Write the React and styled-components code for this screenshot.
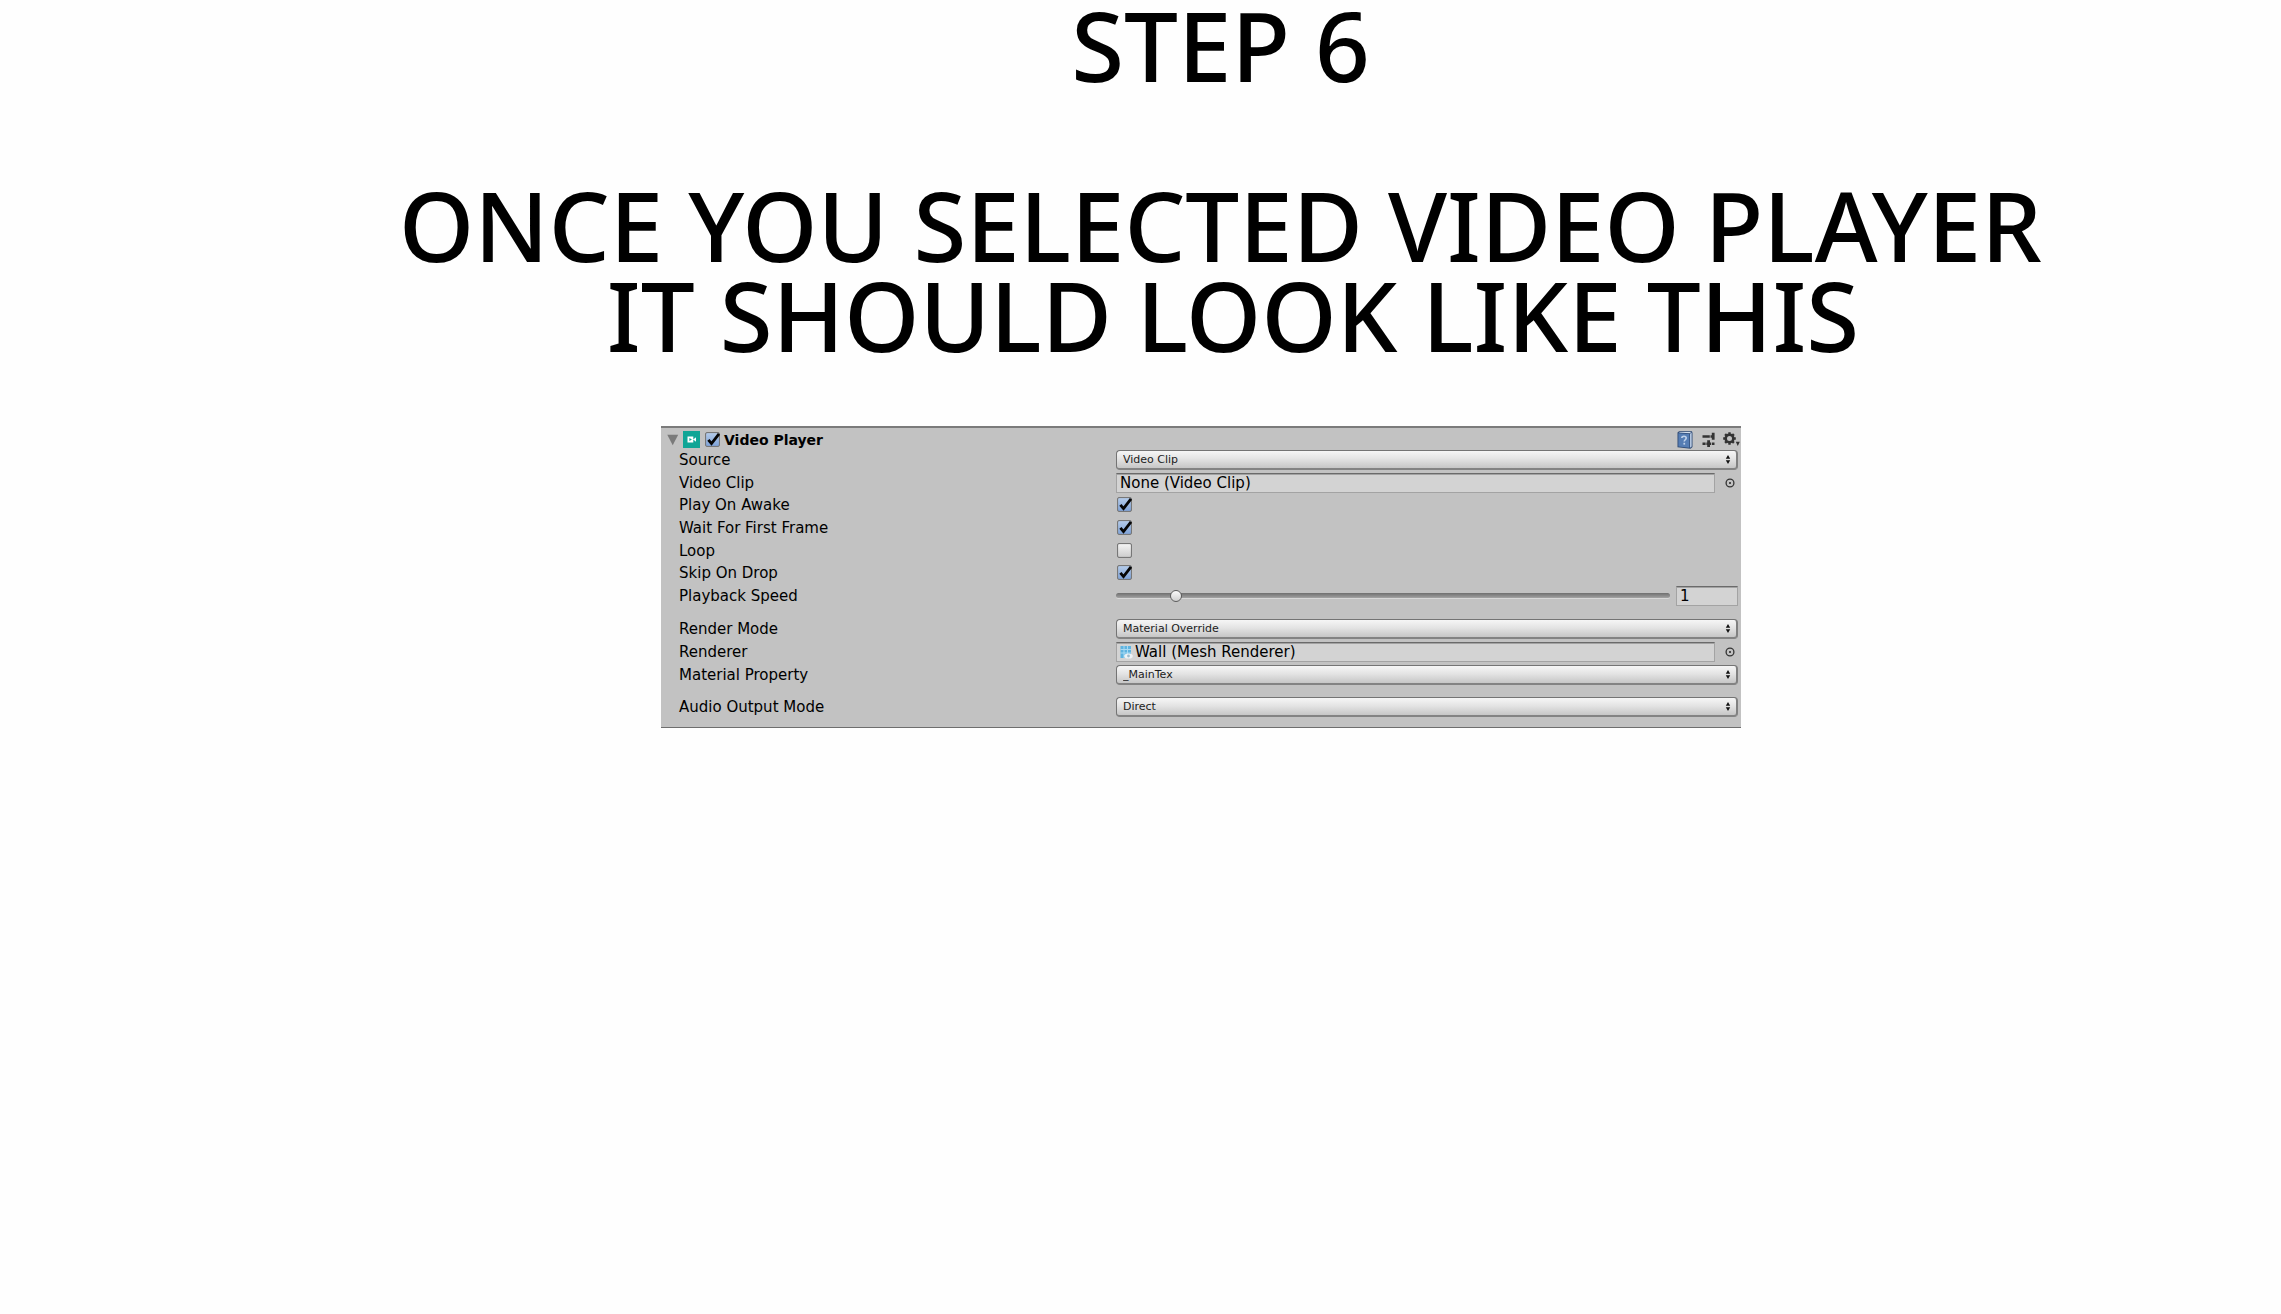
import React, { useState } from 'react'
import styled, { createGlobalStyle } from 'styled-components'

const GlobalStyle = createGlobalStyle`
  * {
    box-sizing: border-box;
  }
  body {
    margin: 0;
    background-color: #fefefe;
    color: #000;
    font-family: "DejaVu Sans", Verdana, sans-serif;
  }
`

const Slide = styled.main`
  display: flex;
  flex-direction: column;
`
const Heading = styled.header`
  padding-left: 160px;
  text-align: center;
  font-family: "Comic Sans MS", "Noto Sans", sans-serif;
  font-size: 96px;
  line-height: 90px;
  h1, p {
    margin: 0;
    font-size: inherit;
    font-weight: 500;
  }
  h1 {
    margin-bottom: 90px;
  }
`
const Panel = styled.section`
  margin: 66px 540px 0 661px;
  padding-bottom: 9px;
  background-color: #c2c2c2;
  border-top: 2px solid #7b7b7b;
  border-bottom: 1px solid #6e6e6e;
`
const TitleBar = styled.div`
  display: flex;
  align-items: center;
  height: 21px;
  padding: 2px 1px 0 6px;
  h2 {
    flex: 1;
    margin: 0 0 0 3px;
    font-size: 14px;
    line-height: 18px;
  }
`
const IconButton = styled.button`
  display: flex;
  padding: 0;
  margin-left: ${props => props.$gap || 0}px;
  border: 0;
  background: none;
`
const TypeIcon = styled.svg`
  margin: 0 5px 0 4px;
`
const Group = styled.div`
  display: grid;
  grid-auto-rows: 1fr;
  height: ${props => props.$height}px;
  margin-bottom: ${props => props.$space || 0}px;
  padding: 0 3px 0 18px;
`
const Row = styled.div`
  display: grid;
  grid-template-columns: 437px minmax(0, 1fr);
  align-items: center;
`
const Label = styled.label`
  font-size: 15px;
  line-height: 20px;
`
const SelectBox = styled.div`
  position: relative;
  display: flex;
  select {
    appearance: none;
    width: 100%;
    height: 20px;
    padding: 0 20px 0 6px;
    border: 1px solid #6f6f6f;
    border-width: 1px 2px 2px 1px;
    border-color: #747474 #808080 #838383 #747474;
    border-radius: 4px;
    background: linear-gradient(#f6f6f6, #e4e4e4 45%, #c6c6c6);
    color: #1c1c1c;
    font-family: inherit;
    font-size: 11px;
  }
  svg {
    position: absolute;
    right: 7px;
    top: 5px;
    pointer-events: none;
  }
`
const CheckBox = styled.span`
  position: relative;
  display: flex;
  width: 16px;
  height: 16px;
  margin-left: ${props => props.$inset || 0}px;
  input {
    appearance: none;
    width: 15px;
    height: 15px;
    margin: 0;
    border: 1px solid #777;
    border-radius: 2px;
    box-shadow: inset 0 0 1px #777;
    background: linear-gradient(#f4f4f4, #cdcdcd);
  }
  input:checked {
    background: linear-gradient(#b4cbe9, #7fa3d8);
  }
  svg {
    position: absolute;
    left: 0;
    top: 0;
    pointer-events: none;
  }
  input:not(:checked) + svg {
    display: none;
  }
`
const ObjectRow = styled.div`
  display: grid;
  grid-template-columns: minmax(0, 1fr) 23px;
  align-items: center;
`
const Well = styled.div`
  display: flex;
  align-items: center;
  height: 20px;
  padding-left: 3px;
  border: 1px solid #a3a3a3;
  border-top: 1px solid #6a6a6a;
  box-shadow: inset 0 1px 0 #a2a2a2;
  background-color: #d3d3d3;
  svg {
    flex-shrink: 0;
    margin-right: 2px;
  }
  input {
    flex: 1;
    min-width: 0;
    padding: 0;
    border: 0;
    background: none;
    color: #000;
    font-family: inherit;
    font-size: 15px;
    line-height: 18px;
    outline: none;
  }
`
const SliderRow = styled.div`
  display: grid;
  grid-template-columns: minmax(0, 1fr) 62px;
  column-gap: 6px;
  align-items: center;
`
const Slider = styled.input`
  appearance: none;
  width: 100%;
  height: 14px;
  margin: 0;
  background: none;
  &::-webkit-slider-runnable-track {
    height: 5px;
    border-radius: 3px;
    background: linear-gradient(#6f6f6f, #929292 70%, #a5a5a5);
    box-shadow: 0 1px 0 #d8d8d8;
  }
  &::-webkit-slider-thumb {
    appearance: none;
    width: 12px;
    height: 12px;
    margin-top: -3px;
    border: 1px solid #5c5c5c;
    border-radius: 50%;
    background: linear-gradient(#fafafa, #cfcfcf);
  }
`

function Tick({ id, label, on, inset }) {
  const [checked, setChecked] = useState(on)
  return (
    <CheckBox $inset={inset}>
      <input id={id} type="checkbox" aria-label={label} checked={checked} onChange={() => setChecked(!checked)} />
      <svg width="16" height="15" viewBox="0 0 16 15">
        <path d="M3.4 7.8L6.5 11.6L14 1.8" fill="none" stroke="#050505" strokeWidth="2.8" />
      </svg>
    </CheckBox>
  )
}

function Dropdown({ id, value }) {
  return (
    <SelectBox>
      <select id={id} defaultValue={value}>
        <option>{value}</option>
      </select>
      <svg width="6" height="9" viewBox="0 0 6 9">
        <path d="M3 0L5.2 3.7H0.8ZM3 9L5.2 5.3H0.8Z" fill="#111" />
      </svg>
    </SelectBox>
  )
}

function ObjectField({ id, value, icon }) {
  return (
    <ObjectRow>
      <Well>
        {icon}
        <input id={id} readOnly value={value} />
      </Well>
      <IconButton $gap={10} aria-label="Pick object">
        <svg width="10" height="10" viewBox="0 0 10 10">
          <circle cx="5" cy="5" r="3.9" fill="none" stroke="#333" strokeWidth="1.3" />
          <circle cx="5" cy="5" r="1" fill="#222" />
        </svg>
      </IconButton>
    </ObjectRow>
  )
}

function Field({ id, label, children }) {
  return (
    <Row>
      <Label htmlFor={id}>{label}</Label>
      {children}
    </Row>
  )
}

const meshIcon = (
  <svg width="13" height="14" viewBox="0 0 13 14">
    <rect x="0.5" y="1" width="10.5" height="12" fill="#5fb4e0" />
    <path d="M4 1V13M7.5 1V13M0.5 4.5H11M0.5 8H11" stroke="#a9daf3" strokeWidth="1" />
    <ellipse cx="8.5" cy="11" rx="4.3" ry="2.6" fill="#eef3f6" />
    <circle cx="8.5" cy="11" r="1.4" fill="#9dbccd" />
  </svg>
)

export default function App() {
  const [speed, setSpeed] = useState('1')
  return (
    <Slide>
      <GlobalStyle />
      <Heading>
        <h1>STEP 6</h1>
        <p>ONCE YOU SELECTED VIDEO PLAYER<br />&nbsp;IT SHOULD LOOK LIKE THIS</p>
      </Heading>
      <Panel>
        <TitleBar>
          <IconButton aria-label="Collapse">
            <svg width="12" height="12" viewBox="0 0 12 12">
              <path d="M0.3 0.8H11.2L5.7 11.3Z" fill="#7a7a7a" />
            </svg>
          </IconButton>
          <TypeIcon width="17" height="17" viewBox="0 0 17 17">
            <rect width="17" height="17" fill="#10a596" />
            <path d="M4.5 5.5H10.3V11.5H4.5ZM10.2 8.5L13 6.2V10.8Z" fill="#fff" />
            <path d="M6.4 7L8.9 8.5L6.4 10Z" fill="#10a596" />
          </TypeIcon>
          <Tick id="enabled" label="Enabled" on />
          <h2>Video Player</h2>
          <IconButton aria-label="Help">
            <svg width="16" height="18" viewBox="0 0 16 18">
              <path d="M0.5 1.5L2 0.3H15L15.5 2V16L13.5 17.8L0.5 16.2Z" fill="#2e4a75" />
              <path d="M1.4 2.3L12.3 3V16.7L1.4 15.4Z" fill="#557db4" />
              <path d="M1.6 1.6L3 0.9H14.3L12.6 2.2Z" fill="#d3dfee" />
              <path d="M13 2.8L14.7 1.4V15.4L13 16.7Z" fill="#b4c6df" />
              <path d="M4.8 7C4.8 4.7 9.2 4.8 9.2 7.1C9.2 8.8 7.2 8.7 7.2 10.6" fill="none" stroke="#c0d2ea" strokeWidth="1.6" />
              <rect x="6.4" y="11.8" width="1.7" height="1.8" fill="#c0d2ea" />
            </svg>
          </IconButton>
          <IconButton $gap={9} aria-label="Presets">
            <svg width="13" height="15" viewBox="0 0 13 15">
              <path d="M0.5 4.5H7.8M8.5 4.5H11M0.5 11.8H3.6M4.4 11.8H9.2M10 11.8H12.5" stroke="#333" strokeWidth="2.6" />
              <path d="M11.2 0.8V7.8M6.6 8.2V15" stroke="#333" strokeWidth="2.8" />
            </svg>
          </IconButton>
          <IconButton $gap={8} aria-label="Settings">
            <svg width="17" height="15" viewBox="0 0 17 15">
              <circle cx="6.5" cy="6.5" r="3.8" fill="none" stroke="#333" strokeWidth="2.6" />
              <path d="M6.5 0.2V2.5M6.5 10.5V12.8M0.2 6.5H2.5M10.5 6.5H12.8M2.1 2.1L3.7 3.7M9.3 9.3L10.9 10.9M10.9 2.1L9.3 3.7M3.7 9.3L2.1 10.9" stroke="#333" strokeWidth="2.4" />
              <path d="M12.8 9.8H16.8L14.8 14Z" fill="#333" />
            </svg>
          </IconButton>
        </TitleBar>
        <Group $height={158} $space={11}>
          <Field id="source" label="Source"><Dropdown id="source" value="Video Clip" /></Field>
          <Field id="clip" label="Video Clip"><ObjectField id="clip" value="None (Video Clip)" /></Field>
          <Field id="awake" label="Play On Awake"><Tick id="awake" inset={1} on /></Field>
          <Field id="wait" label="Wait For First Frame"><Tick id="wait" inset={1} on /></Field>
          <Field id="loop" label="Loop"><Tick id="loop" inset={1} on={false} /></Field>
          <Field id="skip" label="Skip On Drop"><Tick id="skip" inset={1} on /></Field>
          <Field id="speed" label="Playback Speed">
            <SliderRow>
              <Slider type="range" min="0" max="10" step="0.1" aria-label="Playback speed slider" value={speed} onChange={e => setSpeed(e.target.value)} />
              <Well><input id="speed" value={speed} onChange={e => setSpeed(e.target.value)} /></Well>
            </SliderRow>
          </Field>
        </Group>
        <Group $height={68} $space={10}>
          <Field id="mode" label="Render Mode"><Dropdown id="mode" value="Material Override" /></Field>
          <Field id="renderer" label="Renderer"><ObjectField id="renderer" value="Wall (Mesh Renderer)" icon={meshIcon} /></Field>
          <Field id="property" label="Material Property"><Dropdown id="property" value="_MainTex" /></Field>
        </Group>
        <Group $height={22}>
          <Field id="audio" label="Audio Output Mode"><Dropdown id="audio" value="Direct" /></Field>
        </Group>
      </Panel>
    </Slide>
  )
}
